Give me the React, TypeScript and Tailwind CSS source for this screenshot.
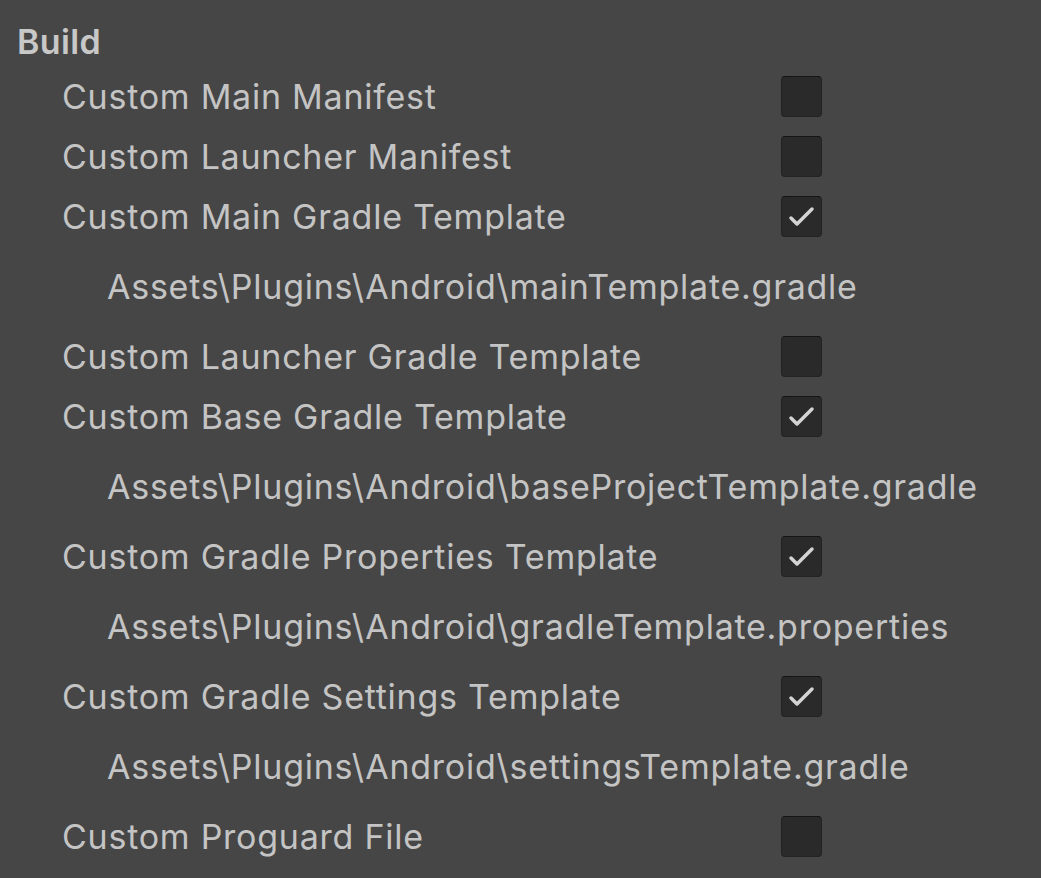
type Row = { label: string; checked: boolean; path?: string };

const rows: Row[] = [
  { label: 'Custom Main Manifest', checked: false },
  { label: 'Custom Launcher Manifest', checked: false },
  { label: 'Custom Main Gradle Template', checked: true, path: 'Assets\\Plugins\\Android\\mainTemplate.gradle' },
  { label: 'Custom Launcher Gradle Template', checked: false },
  { label: 'Custom Base Gradle Template', checked: true, path: 'Assets\\Plugins\\Android\\baseProjectTemplate.gradle' },
  { label: 'Custom Gradle Properties Template', checked: true, path: 'Assets\\Plugins\\Android\\gradleTemplate.properties' },
  { label: 'Custom Gradle Settings Template', checked: true, path: 'Assets\\Plugins\\Android\\settingsTemplate.gradle' },
  { label: 'Custom Proguard File', checked: false },
];

function Toggle({ checked }: { checked: boolean }) {
  return (
    <div className="h-[41px] w-[41px] rounded-[4px] border border-[#232323] border-t-[#151515] bg-[#2a2a2a]">
      {checked && (
        <svg width="39" height="39" viewBox="0 0 39 39" fill="none">
          <polyline
            points="9,21 15,27 30,12"
            stroke="#d4d4d4"
            strokeWidth="3.5"
            strokeLinecap="round"
            strokeLinejoin="round"
          />
        </svg>
      )}
    </div>
  );
}

export default function App() {
  return (
    <div
      className="min-h-[878px] w-[1041px] bg-[#464646] pt-[16px] text-[#c4c4c4]"
      style={{ fontFamily: 'Inter, "Noto Sans", sans-serif' }}
    >
      <div className="flex h-[50px] items-center pl-[17px] text-[34px] font-semibold tracking-[0.01em] text-[#c8c8c8]">
        Build
      </div>
      {rows.map((r) => (
        <div key={r.label}>
          <div className="flex h-[60px] items-center pl-[62px] text-[34px] tracking-[0.022em]">
            <span className="w-[719px]">{r.label}</span>
            <Toggle checked={r.checked} />
          </div>
          {r.path && (
            <div className="flex h-[80px] items-center pl-[107px] text-[34px] tracking-[0.022em]">{r.path}</div>
          )}
        </div>
      ))}
    </div>
  );
}
